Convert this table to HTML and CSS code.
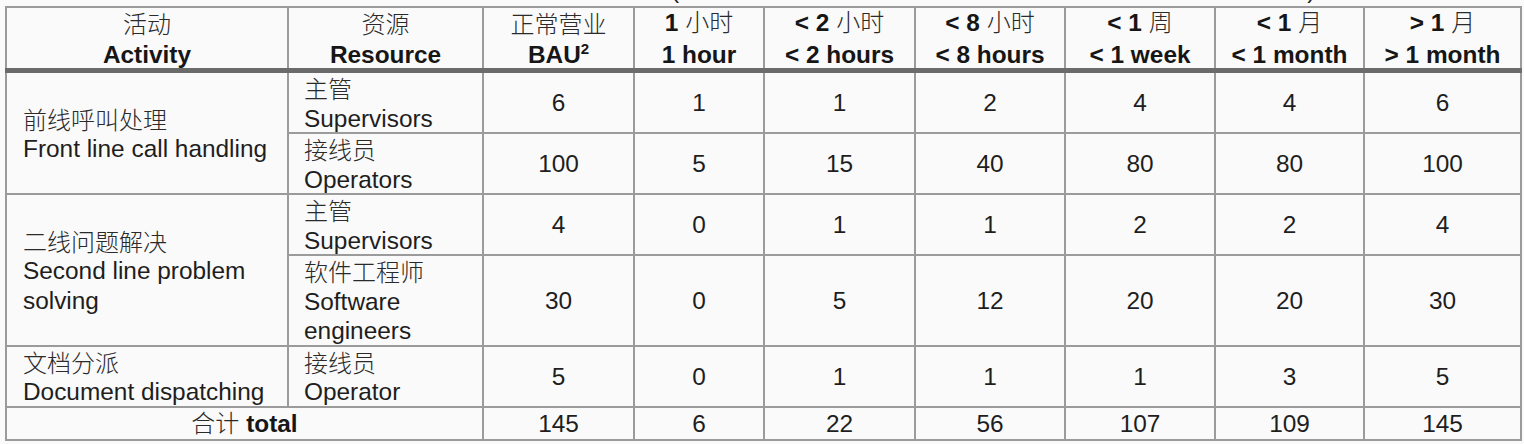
FILE: index.html
```html
<!DOCTYPE html>
<html lang="zh-CN">
<head>
<meta charset="utf-8">
<title>Resource table</title>
<link rel="stylesheet" href="styles.css">
</head>
<body>
<div class="caption"><div class="caption-line"><span class="p1">(</span><span class="p2">)</span></div></div>
<table class="grid">
  <colgroup>
    <col class="c-act"><col class="c-res"><col class="c-bau"><col class="c-1h"><col class="c-2h"><col class="c-8h"><col class="c-1w"><col class="c-1m"><col class="c-gm">
  </colgroup>
  <thead>
    <tr>
      <th><span class="ln zh">活动</span><span class="ln en">Activity</span></th>
      <th><span class="ln zh">资源</span><span class="ln en">Resource</span></th>
      <th><span class="ln zh">正常营业</span><span class="ln en">BAU<sup>2</sup></span></th>
      <th><span class="ln">1 <span class="zh">小时</span></span><span class="ln en">1 hour</span></th>
      <th><span class="ln">&lt; 2 <span class="zh">小时</span></span><span class="ln en">&lt; 2 hours</span></th>
      <th><span class="ln">&lt; 8 <span class="zh">小时</span></span><span class="ln en">&lt; 8 hours</span></th>
      <th><span class="ln">&lt; 1 <span class="zh">周</span></span><span class="ln en">&lt; 1 week</span></th>
      <th><span class="ln">&lt; 1 <span class="zh">月</span></span><span class="ln en">&lt; 1 month</span></th>
      <th><span class="ln">&gt; 1 <span class="zh">月</span></span><span class="ln en">&gt; 1 month</span></th>
    </tr>
  </thead>
  <tbody>
    <tr>
      <td class="act" rowspan="2"><span class="ln zh">前线呼叫处理</span><span class="ln en">Front line call handling</span></td>
      <td class="res"><span class="ln zh">主管</span><span class="ln en">Supervisors</span></td>
      <td>6</td><td>1</td><td>1</td><td>2</td><td>4</td><td>4</td><td>6</td>
    </tr>
    <tr>
      <td class="res"><span class="ln zh">接线员</span><span class="ln en">Operators</span></td>
      <td>100</td><td>5</td><td>15</td><td>40</td><td>80</td><td>80</td><td>100</td>
    </tr>
    <tr>
      <td class="act" rowspan="2"><span class="ln zh">二线问题解决</span><span class="ln en">Second line problem</span><span class="ln en">solving</span></td>
      <td class="res"><span class="ln zh">主管</span><span class="ln en">Supervisors</span></td>
      <td>4</td><td>0</td><td>1</td><td>1</td><td>2</td><td>2</td><td>4</td>
    </tr>
    <tr>
      <td class="res"><span class="ln zh">软件工程师</span><span class="ln en">Software</span><span class="ln en">engineers</span></td>
      <td>30</td><td>0</td><td>5</td><td>12</td><td>20</td><td>20</td><td>30</td>
    </tr>
    <tr>
      <td class="act"><span class="ln zh">文档分派</span><span class="ln en">Document dispatching</span></td>
      <td class="res"><span class="ln zh">接线员</span><span class="ln en">Operator</span></td>
      <td>5</td><td>0</td><td>1</td><td>1</td><td>1</td><td>3</td><td>5</td>
    </tr>
    <tr class="total">
      <td colspan="2"><span class="ln"><span class="zh">合计</span> <b>total</b></span></td>
      <td>145</td><td>6</td><td>22</td><td>56</td><td>107</td><td>109</td><td>145</td>
    </tr>
  </tbody>
</table>
</body>
</html>
```

FILE: styles.css
```css
html, body {
  margin: 0;
  padding: 0;
  background: #fafafa;
}

body {
  padding: 0 0 0 5px;
  font-family: "Liberation Sans", Arial, "Noto Sans CJK SC", sans-serif;
  font-size: 24.4px;
  color: #1e1e1e;
}

.caption {
  height: 6px;
  overflow: hidden;
}

.caption-line {
  margin-top: -22px;
  line-height: 24px;
  display: flex;
  padding-left: 666px;
  color: #222;
}

.caption-line .p2 {
  margin-left: 628px;
}

.grid {
  border-collapse: collapse;
  table-layout: fixed;
  width: 1517px;
  border: 2px solid #9b9b9b;
}

.c-act { width: 282px; }
.c-res { width: 195px; }
.c-bau { width: 151px; }
.c-1h { width: 130px; }
.c-2h { width: 151px; }
.c-8h { width: 150px; }
.c-1w { width: 150px; }
.c-1m { width: 149px; }
.c-gm { width: 157px; }

.grid th,
.grid td {
  border: 2px solid #9b9b9b;
  padding: 0;
  text-align: center;
  vertical-align: middle;
  line-height: 29.5px;
}

.ln {
  display: block;
  box-sizing: border-box;
  height: 29.5px;
  line-height: 29.5px;
  white-space: nowrap;
}

.ln.en {
  padding-top: 1px;
}

.grid th {
  font-weight: bold;
  color: #161616;
  border-bottom: 5px solid #6b6b6b;
}

.grid th .ln {
  height: 30px;
  line-height: 30px;
}

.grid th .ln.en {
  padding-top: 2px;
}

.grid th sup {
  font-size: 15px;
  line-height: 0;
  vertical-align: 9px;
}

.zh {
  font-family: "Noto Sans CJK SC", sans-serif;
  font-size: 24px;
  font-weight: 300;
  color: #2a2a2a;
  line-height: 1;
}

.ln.zh {
  line-height: 29.5px;
}

.grid th .ln.zh {
  line-height: 30px;
}

.grid td.act {
  text-align: left;
  padding-left: 16px;
}

.grid td.res {
  text-align: left;
  padding-left: 15px;
}

.grid td {
  padding-top: 1px;
}

.grid td.act,
.grid td.res {
  padding-top: 0;
}

.total td,
.total .ln {
  height: 30px;
  line-height: 30px;
}

.total b {
  font-weight: bold;
  color: #161616;
}
```
